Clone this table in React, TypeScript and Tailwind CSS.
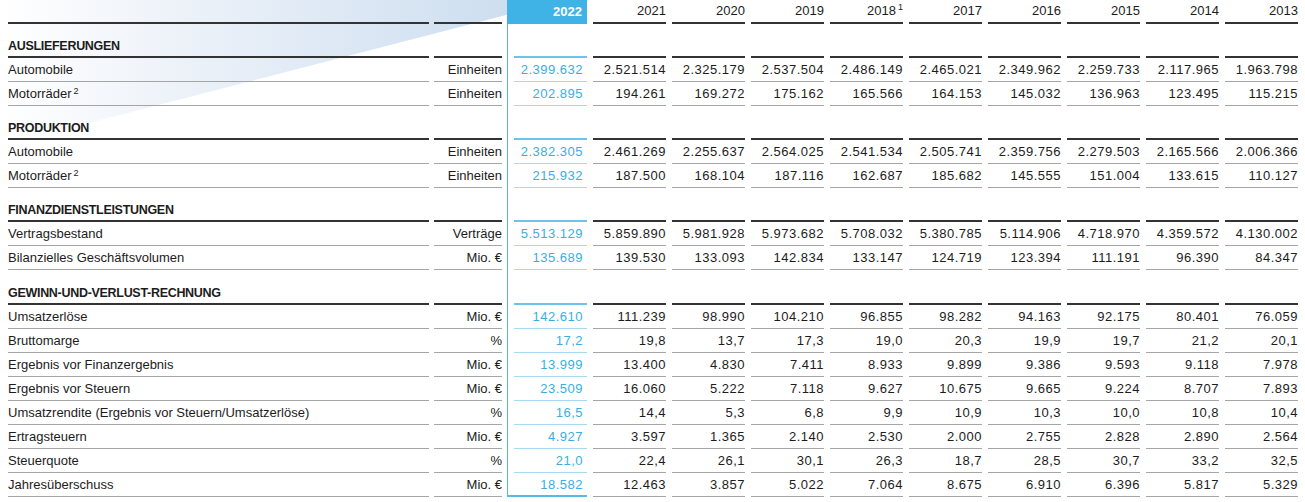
import type { ReactNode } from 'react'

interface DataRow {
  label: string
  sup?: string
  unit: string
  values: string[]
}

interface Section {
  title: string
  rows: DataRow[]
}

const YEARS: { year: string, sup?: string }[] = [
  { year: '2022' },
  { year: '2021' },
  { year: '2020' },
  { year: '2019' },
  { year: '2018', sup: '1' },
  { year: '2017' },
  { year: '2016' },
  { year: '2015' },
  { year: '2014' },
  { year: '2013' },
]

const SECTIONS: Section[] = [
  {
    title: 'AUSLIEFERUNGEN',
    rows: [
      { label: 'Automobile', unit: 'Einheiten', values: ['2.399.632', '2.521.514', '2.325.179', '2.537.504', '2.486.149', '2.465.021', '2.349.962', '2.259.733', '2.117.965', '1.963.798'] },
      { label: 'Motorräder', sup: '2', unit: 'Einheiten', values: ['202.895', '194.261', '169.272', '175.162', '165.566', '164.153', '145.032', '136.963', '123.495', '115.215'] },
    ],
  },
  {
    title: 'PRODUKTION',
    rows: [
      { label: 'Automobile', unit: 'Einheiten', values: ['2.382.305', '2.461.269', '2.255.637', '2.564.025', '2.541.534', '2.505.741', '2.359.756', '2.279.503', '2.165.566', '2.006.366'] },
      { label: 'Motorräder', sup: '2', unit: 'Einheiten', values: ['215.932', '187.500', '168.104', '187.116', '162.687', '185.682', '145.555', '151.004', '133.615', '110.127'] },
    ],
  },
  {
    title: 'FINANZDIENSTLEISTUNGEN',
    rows: [
      { label: 'Vertragsbestand', unit: 'Verträge', values: ['5.513.129', '5.859.890', '5.981.928', '5.973.682', '5.708.032', '5.380.785', '5.114.906', '4.718.970', '4.359.572', '4.130.002'] },
      { label: 'Bilanzielles Geschäftsvolumen', unit: 'Mio. €', values: ['135.689', '139.530', '133.093', '142.834', '133.147', '124.719', '123.394', '111.191', '96.390', '84.347'] },
    ],
  },
  {
    title: 'GEWINN-UND-VERLUST-RECHNUNG',
    rows: [
      { label: 'Umsatzerlöse', unit: 'Mio. €', values: ['142.610', '111.239', '98.990', '104.210', '96.855', '98.282', '94.163', '92.175', '80.401', '76.059'] },
      { label: 'Bruttomarge', unit: '%', values: ['17,2', '19,8', '13,7', '17,3', '19,0', '20,3', '19,9', '19,7', '21,2', '20,1'] },
      { label: 'Ergebnis vor Finanzergebnis', unit: 'Mio. €', values: ['13.999', '13.400', '4.830', '7.411', '8.933', '9.899', '9.386', '9.593', '9.118', '7.978'] },
      { label: 'Ergebnis vor Steuern', unit: 'Mio. €', values: ['23.509', '16.060', '5.222', '7.118', '9.627', '10.675', '9.665', '9.224', '8.707', '7.893'] },
      { label: 'Umsatzrendite (Ergebnis vor Steuern/Umsatzerlöse)', unit: '%', values: ['16,5', '14,4', '5,3', '6,8', '9,9', '10,9', '10,3', '10,0', '10,8', '10,4'] },
      { label: 'Ertragsteuern', unit: 'Mio. €', values: ['4.927', '3.597', '1.365', '2.140', '2.530', '2.000', '2.755', '2.828', '2.890', '2.564'] },
      { label: 'Steuerquote', unit: '%', values: ['21,0', '22,4', '26,1', '30,1', '26,3', '18,7', '28,5', '30,7', '33,2', '32,5'] },
      { label: 'Jahresüberschuss', unit: 'Mio. €', values: ['18.582', '12.463', '3.857', '5.022', '7.064', '8.675', '6.910', '6.396', '5.817', '5.329'] },
    ],
  },
]

function Sup({ children }: { children: ReactNode }) {
  return <sup className="ml-[2px] text-[9px]">{children}</sup>
}

// first two columns of every row: label + unit
function LeadCells({ label, unit, heavy }: { label: ReactNode, unit?: string, heavy?: boolean }) {
  const line = heavy ? 'border-b-2 border-[#333]' : 'border-b border-[#a5a5a5]'
  return (
    <>
      <div className={`ml-2 flex w-[421px] shrink-0 ${heavy ? 'items-end' : 'items-center pt-[1px]'} ${line}`}>
        {label}
      </div>
      <div className={`ml-[5px] flex w-[68px] shrink-0 items-center justify-end pt-[1px] ${line}`}>
        {unit}
      </div>
    </>
  )
}

function HeaderRow() {
  return (
    <div className="flex h-6">
      <LeadCells label="" heavy />
      <div className="ml-[5px] flex w-[80px] shrink-0 items-center justify-end bg-[#3fb3e6] pr-[5px] pb-[1px] font-bold text-white">
        {YEARS[0].year}
      </div>
      {YEARS.slice(1).map(y => (
        <div key={y.year} className="ml-[6px] flex w-[73px] shrink-0 items-center justify-end border-b-2 border-[#333]">
          {y.year}
          {y.sup && <Sup>{y.sup}</Sup>}
        </div>
      ))}
    </div>
  )
}

function SectionRow({ title, tall }: { title: string, tall?: boolean }) {
  return (
    <div className={`flex ${tall ? 'h-[35px]' : 'h-[34px]'}`}>
      <LeadCells label={<span className="pb-[1px] text-[12.5px] leading-[18px] font-bold tracking-[-0.3px]">{title}</span>} heavy />
      <div className="ml-[5px] flex w-[80px] shrink-0 border-l border-[#56b9e8] pl-[6px]">
        <div className="w-[73px] border-b-2 border-[#6cc3ec]" />
      </div>
      {YEARS.slice(1).map(y => (
        <div key={y.year} className="ml-[6px] w-[73px] shrink-0 border-b-2 border-[#333]" />
      ))}
    </div>
  )
}

function ValueRow({ row, last }: { row: DataRow, last?: boolean }) {
  const [current, ...rest] = row.values
  return (
    <div className="flex h-6">
      <LeadCells
        label={(
          <span>
            {row.label}
            {row.sup && <Sup>{row.sup}</Sup>}
          </span>
        )}
        unit={row.unit}
      />
      <div className={`ml-[5px] flex w-[80px] shrink-0 border-l border-[#56b9e8] pl-[6px] ${last ? 'border-b-2' : ''}`}>
        <div className={`flex w-[73px] items-center justify-end pt-[1px] pr-[4px] tracking-[0.5px] text-[#3aaee3] ${last ? '' : 'border-b border-[#a6d9f2]'}`}>
          {current}
        </div>
      </div>
      {rest.map((v, i) => (
        <div key={i} className="ml-[6px] flex w-[73px] shrink-0 items-center justify-end border-b border-[#a5a5a5] pt-[1px] tracking-[0.5px]">
          {v}
        </div>
      ))}
    </div>
  )
}

function Backdrop() {
  return (
    <svg className="pointer-events-none absolute left-0 top-0" width="510" height="150" aria-hidden="true">
      <defs>
        <linearGradient id="fade" x1="0" y1="0" x2="1" y2="0">
          <stop offset="0" stopColor="#ffffff" />
          <stop offset="0.35" stopColor="#edf2f9" />
          <stop offset="1" stopColor="#cddef0" />
        </linearGradient>
      </defs>
      <polygon points="0,0 510,0 510,14 0,146" fill="url(#fade)" />
    </svg>
  )
}

export default function App() {
  return (
    <div className="relative h-[502px] w-[1305px] overflow-hidden bg-white font-['Liberation_Sans',Arial,sans-serif] text-[13px] text-[#1c1c1c]">
      <Backdrop />
      <div className="relative">
        <HeaderRow />
        {SECTIONS.map((s, si) => (
          <div key={s.title}>
            <SectionRow title={s.title} tall={si === 3} />
            {s.rows.map((r, ri) => (
              <ValueRow
                key={r.label + ri}
                row={r}
                last={si === SECTIONS.length - 1 && ri === s.rows.length - 1}
              />
            ))}
          </div>
        ))}
      </div>
    </div>
  )
}
